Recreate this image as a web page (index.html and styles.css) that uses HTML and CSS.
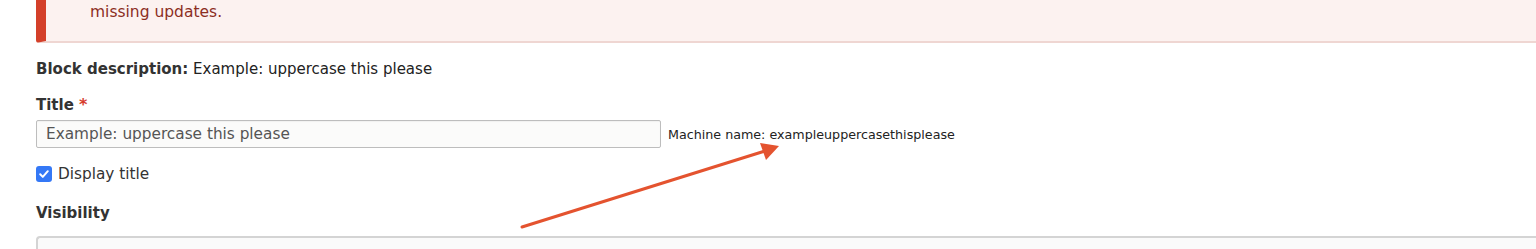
FILE: index.html
```html
<!DOCTYPE html>
<html>
<head>
<meta charset="utf-8">
<link rel="stylesheet" href="styles.css">
</head>
<body>
<div class="page">
  <div class="messages-error">
    <div class="msg-text">missing updates.</div>
  </div>
  <div class="form">
    <div class="item item-desc"><strong>Block description:</strong> Example: uppercase this please</div>
    <div class="item item-title">
      <label class="label">Title <span class="req">*</span></label>
      <div class="title-row">
        <div class="input">Example: uppercase this please</div>
        <span class="machine">Machine name: exampleuppercasethisplease</span>
      </div>
    </div>
    <div class="item item-check">
      <span class="checkbox"><svg width="12" height="12" viewBox="0 0 12 12"><path d="M2.2 6.3 L4.8 8.9 L9.8 3.2" fill="none" stroke="#fff" stroke-width="2" stroke-linecap="round" stroke-linejoin="round"/></svg></span>
      <span class="check-label">Display title</span>
    </div>
    <div class="item item-vis"><span class="label">Visibility</span></div>
    <div class="vis-box"></div>
  </div>
  <svg class="arrow" width="1536" height="249" viewBox="0 0 1536 249">
    <line x1="522" y1="227" x2="765" y2="151" stroke="#e4532f" stroke-width="3" stroke-linecap="round"/>
    <polygon points="779,146 760,143 766,160" fill="#e4532f"/>
  </svg>
</div>
</body>
</html>
```
FILE: styles.css
```css
html, body {
  margin: 0;
  padding: 0;
  background: #fff;
}
.page {
  position: relative;
  width: 1536px;
  height: 249px;
  overflow: hidden;
  font-family: "DejaVu Sans", "Lucida Grande", sans-serif;
  color: #333;
}
.messages-error {
  margin-left: 36px;
  margin-right: -10px;
  height: 41px;
  background: #fcf2f0;
  border-left: 10px solid #d4402a;
  border-bottom: 2px solid #efd6d2;
  border-bottom-left-radius: 3px;
  box-sizing: content-box;
}
.msg-text {
  padding-left: 44px;
  padding-top: 2px;
  font-size: 15.5px;
  line-height: 20px;
  color: #8c2e1f;
}
.form {
  padding-left: 36px;
}
.item-desc {
  margin-top: 17px;
  font-size: 15px;
  line-height: 18px;
  color: #222;
}
.item-desc strong {
  color: #333;
}
.item-title {
  margin-top: 18px;
}
.label {
  font-weight: bold;
  font-size: 15px;
  line-height: 18px;
  color: #333;
  display: block;
}
.req {
  color: #d63b2b;
  font-size: 16px;
}
.title-row {
  display: flex;
  align-items: center;
  margin-top: 6px;
}
.input {
  width: 625px;
  height: 28px;
  box-sizing: border-box;
  border: 1px solid #bdbdbd;
  border-radius: 2px;
  background: #fbfbfa;
  padding: 0 9px;
  font-size: 15.3px;
  line-height: 26px;
  color: #555;
  box-shadow: inset 0 1px 1px rgba(0,0,0,0.04);
}
.machine {
  margin-left: 7px;
  font-size: 12.7px;
  color: #222;
}
.item-check {
  display: flex;
  align-items: center;
  margin-top: 17px;
  height: 18px;
}
.checkbox {
  width: 16px;
  height: 16px;
  border-radius: 3px;
  background: #3478f6;
  display: flex;
  align-items: center;
  justify-content: center;
}
.check-label {
  margin-left: 6px;
  font-size: 15.3px;
  color: #333;
}
.item-vis {
  margin-top: 21px;
}
.vis-box {
  margin-top: 14px;
  height: 40px;
  margin-right: -10px;
  border: 2px solid #d4d4d4;
  border-right: none;
  border-bottom: none;
  border-top-left-radius: 4px;
  background: #fafafa;
}
.arrow {
  position: absolute;
  left: 0;
  top: 0;
  pointer-events: none;
}
```
